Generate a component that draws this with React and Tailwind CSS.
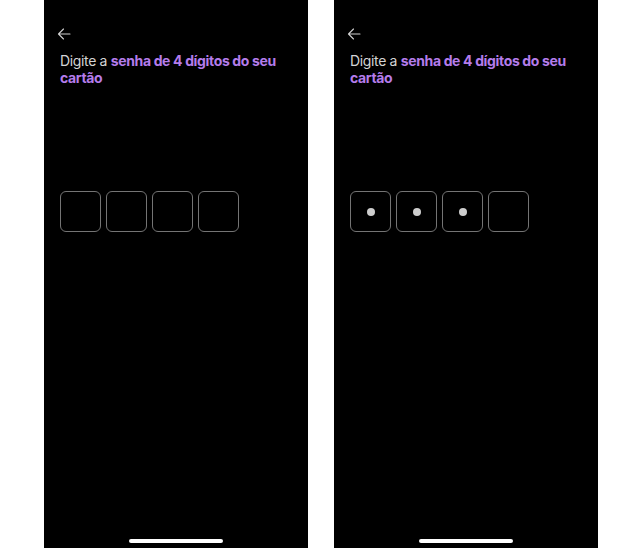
import React from "react";

const PinScreen = ({ filled }) => {
  return (
    <div className="relative flex h-[548px] w-[264px] flex-col bg-black px-4 pt-[28px]">
      {/* back */}
      <button className="ml-[-3px] flex h-[12px] w-[14px] items-center">
        <svg width="14" height="12" viewBox="0 0 14 12" fill="none">
          <path
            d="M13 6H1.5M6.5 1L1.5 6L6.5 11"
            stroke="#cfcfcf"
            strokeWidth="1.1"
            strokeLinecap="round"
            strokeLinejoin="round"
          />
        </svg>
      </button>

      <div className="mt-[13px] text-[14px] leading-[16.5px] tracking-[-0.025em] text-[#d4d4d4] [font-family:Inter,'Noto_Sans',sans-serif]">
        <p>
          Digite a <span className="font-bold text-[#b47ceb]">senha de 4 dígitos do seu</span>
        </p>
        <p className="font-bold text-[#b47ceb]">cartão</p>
      </div>

      <div className="mt-[105px] flex gap-[5px]">
        {[0, 1, 2, 3].map((i) => (
          <div
            key={i}
            className="flex h-[41px] w-[41px] items-center justify-center rounded-[6px] border border-[#747474]"
          >
            {i < filled && <div className="h-[8px] w-[8px] rounded-full bg-[#cdcdcd]" />}
          </div>
        ))}
      </div>

      {/* home indicator */}
      <div className="absolute bottom-[5px] left-1/2 h-[4px] w-[94px] -translate-x-1/2 rounded-full bg-white" />
    </div>
  );
};

export default function App() {
  return (
    <div className="flex h-[548px] w-[640px] gap-[26px] bg-white pl-[44px]">
      <PinScreen filled={0} />
      <PinScreen filled={3} />
    </div>
  );
}
